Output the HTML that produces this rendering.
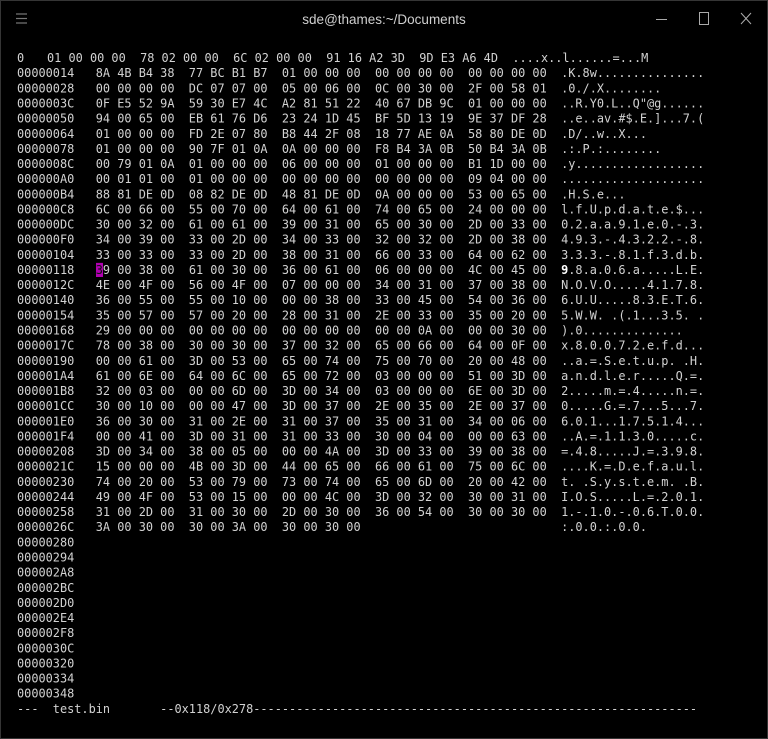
<!DOCTYPE html>
<html><head><meta charset="utf-8"><style>
html,body{margin:0;padding:0;background:#000;}
body{width:768px;height:739px;position:relative;overflow:hidden;}
.frame{position:absolute;left:0;top:0;width:766px;height:737px;border:1px solid #353535;}
.title{position:absolute;left:0;width:768px;top:12px;text-align:center;font:13.5px "Liberation Sans",sans-serif;color:#cfcfcf;}
pre{margin:0;position:absolute;font-family:"DejaVu Sans Mono","Liberation Mono",monospace;font-size:11.9px;line-height:15px;color:#d2d2d2;white-space:pre;transform-origin:0 0;transform:scaleY(1.0089);}
.cur{background:#b000b0;color:#111;}
.b{color:#fff;font-weight:bold;}
</style></head><body>
<div class="frame"></div>
<svg style="position:absolute;left:15px;top:12px" width="14" height="14"><g stroke="#777" stroke-width="1.2"><line x1="1" y1="2" x2="12" y2="2"/><line x1="1" y1="6.5" x2="12" y2="6.5"/><line x1="1" y1="11" x2="12" y2="11"/></g></svg>
<div class="title">sde@thames:~/Documents</div>
<svg style="position:absolute;left:650px;top:10px" width="110" height="18"><g stroke="#aaa" stroke-width="1" fill="none"><line x1="6" y1="9.5" x2="17" y2="9.5"/><rect x="49.5" y="2.5" width="9" height="12"/><line x1="91" y1="3" x2="101" y2="14"/><line x1="101" y1="3" x2="91" y2="14"/></g></svg>
<pre style="left:17px;top:51px">0
00000014   8A 4B B4 38  77 BC B1 B7  01 00 00 00  00 00 00 00  00 00 00 00  .K.8w...............
00000028   00 00 00 00  DC 07 07 00  05 00 06 00  0C 00 30 00  2F 00 58 01  .0./.X........
0000003C   0F E5 52 9A  59 30 E7 4C  A2 81 51 22  40 67 DB 9C  01 00 00 00  ..R.Y0.L..Q"@g......
00000050   94 00 65 00  EB 61 76 D6  23 24 1D 45  BF 5D 13 19  9E 37 DF 28  ..e..av.#$.E.]...7.(
00000064   01 00 00 00  FD 2E 07 80  B8 44 2F 08  18 77 AE 0A  58 80 DE 0D  .D/..w..X...
00000078   01 00 00 00  90 7F 01 0A  0A 00 00 00  F8 B4 3A 0B  50 B4 3A 0B  .:.P.:........
0000008C   00 79 01 0A  01 00 00 00  06 00 00 00  01 00 00 00  B1 1D 00 00  .y..................
000000A0   00 01 01 00  01 00 00 00  00 00 00 00  00 00 00 00  09 04 00 00  ....................
000000B4   88 81 DE 0D  08 82 DE 0D  48 81 DE 0D  0A 00 00 00  53 00 65 00  .H.S.e...
000000C8   6C 00 66 00  55 00 70 00  64 00 61 00  74 00 65 00  24 00 00 00  l.f.U.p.d.a.t.e.$...
000000DC   30 00 32 00  61 00 61 00  39 00 31 00  65 00 30 00  2D 00 33 00  0.2.a.a.9.1.e.0.-.3.
000000F0   34 00 39 00  33 00 2D 00  34 00 33 00  32 00 32 00  2D 00 38 00  4.9.3.-.4.3.2.2.-.8.
00000104   33 00 33 00  33 00 2D 00  38 00 31 00  66 00 33 00  64 00 62 00  3.3.3.-.8.1.f.3.d.b.
00000118   <span class="cur">3</span>9 00 38 00  61 00 30 00  36 00 61 00  06 00 00 00  4C 00 45 00  <span class="b">9</span>.8.a.0.6.a.....L.E.
0000012C   4E 00 4F 00  56 00 4F 00  07 00 00 00  34 00 31 00  37 00 38 00  N.O.V.O.....4.1.7.8.
00000140   36 00 55 00  55 00 10 00  00 00 38 00  33 00 45 00  54 00 36 00  6.U.U.....8.3.E.T.6.
00000154   35 00 57 00  57 00 20 00  28 00 31 00  2E 00 33 00  35 00 20 00  5.W.W. .(.1...3.5. .
00000168   29 00 00 00  00 00 00 00  00 00 00 00  00 00 0A 00  00 00 30 00  ).0..............
0000017C   78 00 38 00  30 00 30 00  37 00 32 00  65 00 66 00  64 00 0F 00  x.8.0.0.7.2.e.f.d...
00000190   00 00 61 00  3D 00 53 00  65 00 74 00  75 00 70 00  20 00 48 00  ..a.=.S.e.t.u.p. .H.
000001A4   61 00 6E 00  64 00 6C 00  65 00 72 00  03 00 00 00  51 00 3D 00  a.n.d.l.e.r.....Q.=.
000001B8   32 00 03 00  00 00 6D 00  3D 00 34 00  03 00 00 00  6E 00 3D 00  2.....m.=.4.....n.=.
000001CC   30 00 10 00  00 00 47 00  3D 00 37 00  2E 00 35 00  2E 00 37 00  0.....G.=.7...5...7.
000001E0   36 00 30 00  31 00 2E 00  31 00 37 00  35 00 31 00  34 00 06 00  6.0.1...1.7.5.1.4...
000001F4   00 00 41 00  3D 00 31 00  31 00 33 00  30 00 04 00  00 00 63 00  ..A.=.1.1.3.0.....c.
00000208   3D 00 34 00  38 00 05 00  00 00 4A 00  3D 00 33 00  39 00 38 00  =.4.8.....J.=.3.9.8.
0000021C   15 00 00 00  4B 00 3D 00  44 00 65 00  66 00 61 00  75 00 6C 00  ....K.=.D.e.f.a.u.l.
00000230   74 00 20 00  53 00 79 00  73 00 74 00  65 00 6D 00  20 00 42 00  t. .S.y.s.t.e.m. .B.
00000244   49 00 4F 00  53 00 15 00  00 00 4C 00  3D 00 32 00  30 00 31 00  I.O.S.....L.=.2.0.1.
00000258   31 00 2D 00  31 00 30 00  2D 00 30 00  36 00 54 00  30 00 30 00  1.-.1.0.-.0.6.T.0.0.
0000026C   3A 00 30 00  30 00 3A 00  30 00 30 00                            :.0.0.:.0.0.
00000280
00000294
000002A8
000002BC
000002D0
000002E4
000002F8
0000030C
00000320
00000334
00000348
---  test.bin       --0x118/0x278--------------------------------------------------------------</pre>
<pre style="left:47px;top:51px">01 00 00 00  78 02 00 00  6C 02 00 00  91 16 A2 3D  9D E3 A6 4D  ....x..l......=...M</pre>
</body></html>
